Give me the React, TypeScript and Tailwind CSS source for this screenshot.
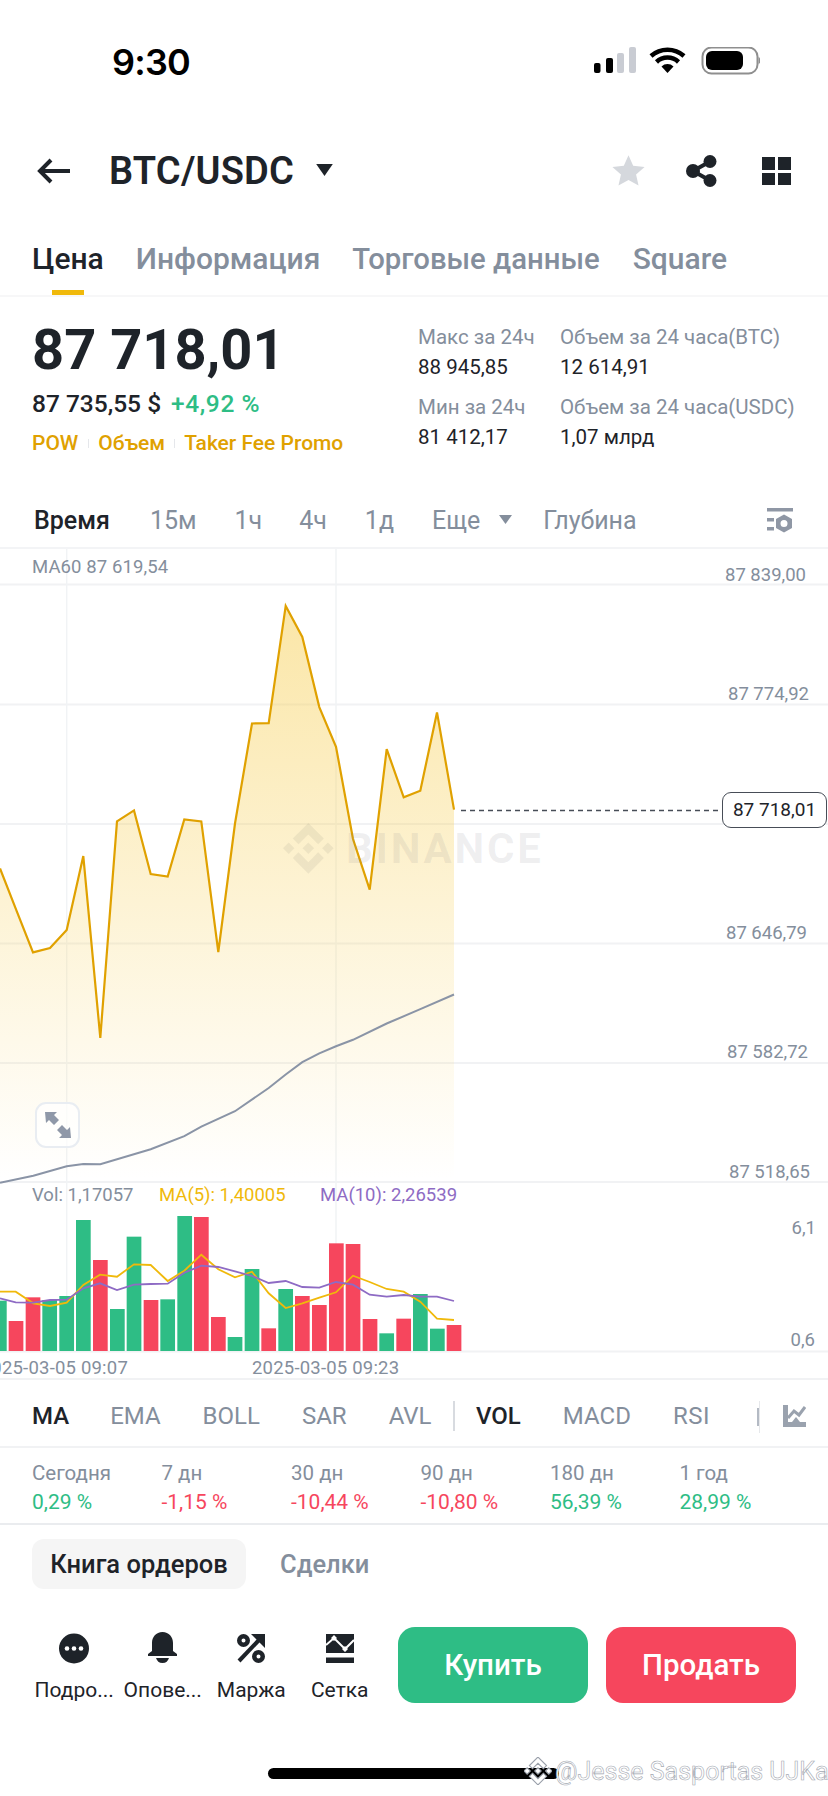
const price: [number, number][] = [[0,780],[50,885],[99,986],[150,975],[200,931],[250,750],[301,1195],[351,665],[402,638],[452,794],[503,800],[553,660],[604,665],[655,985],[705,670],[756,425],[806,424],[857,137],[907,213],[958,385],[1008,482],[1059,708],[1109,832],[1160,488],[1211,606],[1261,590],[1311,398],[1362,636]];
const ma60: [number, number][] = [[0,1550],[100,1533],[200,1510],[250,1504],[301,1505],[452,1468],[553,1436],[604,1413],[705,1375],[806,1318],[857,1285],[907,1255],[958,1233],[1008,1216],[1059,1200],[1160,1160],[1261,1125],[1362,1089]];
const ma5: [number, number][] = [[0,365],[47,365],[100,400],[150,408],[200,398],[250,345],[300,314],[351,320],[402,283],[452,285],[503,333],[553,302],[604,254],[655,298],[705,322],[756,305],[806,370],[857,414],[907,400],[958,383],[1008,367],[1059,317],[1109,336],[1160,357],[1211,365],[1261,395],[1311,446],[1362,450]];
const ma10: [number, number][] = [[0,385],[47,397],[100,398],[150,390],[200,389],[250,355],[300,340],[351,360],[402,344],[452,342],[503,341],[553,308],[604,287],[655,291],[705,304],[756,318],[806,339],[857,333],[907,351],[958,353],[1008,336],[1059,344],[1109,374],[1160,380],[1211,375],[1261,380],[1311,380],[1362,393]];
const bars: [number, number, number][] = [[-24,392,1],[26,453,0],[77,382,0],[127,390,1],[178,378,1],[228,150,1],[279,270,0],[330,417,1],[380,200,1],[431,390,0],[481,388,1],[532,138,1],[582,141,0],[633,441,0],[683,501,1],[734,297,1],[784,475,0],[835,357,1],[885,378,0],[936,405,0],[987,220,0],[1037,222,0],[1088,447,0],[1138,490,1],[1189,446,0],[1239,372,1],[1290,476,1],[1340,465,0]];

const priceY = (y: number) => y / 2.45 + 550;
const volY = (y: number) => y / 3 + 1170;
const pts = (a: [number, number][], fy: (y: number) => number) => a.map(([x, y]) => `${(x / 3).toFixed(1)},${fy(y).toFixed(1)}`).join(" ");

const BINANCE_LOGO = "M38.73 53.2l24.59-24.58 24.6 24.6 14.3-14.31L63.32 0 24.43 38.9zM0 63.31l14.3-14.3 14.31 14.3-14.31 14.3zM38.73 73.41l24.59 24.59 24.6-24.6 14.31 14.29-38.9 38.91-38.91-38.88zM98 63.31l14.3-14.3 14.31 14.3-14.31 14.3zM77.83 63.3L63.32 48.78 52.59 59.51l-1.24 1.23-2.54 2.54 14.51 14.5 14.51-14.47z";

function PriceChart() {
  const line = pts(price, priceY);
  return (
    <svg className="absolute inset-0" width="828" height="829" viewBox="0 549 828 829">
      <defs>
        <linearGradient id="fill" gradientUnits="userSpaceOnUse" x1="0" y1="600" x2="0" y2="1180">
          <stop offset="0" stopColor="#f7cf55" stopOpacity="0.52" />
          <stop offset="1" stopColor="#f7cf55" stopOpacity="0" />
        </linearGradient>
      </defs>
      {[584.5, 704.5, 824, 943.5, 1063, 1182].map((y) => (
        <line key={y} x1="0" x2="828" y1={y} y2={y} stroke="#f1f2f4" strokeWidth="2" />
      ))}
      <line x1="0" x2="828" y1="1351.5" y2="1351.5" stroke="#f1f2f4" strokeWidth="2" />
      <line x1="66.7" x2="66.7" y1="549" y2="1351" stroke="#f1f3f5" strokeWidth="1.5" />
      <line x1="336" x2="336" y1="549" y2="1351" stroke="#f1f3f5" strokeWidth="1.5" />
      <polygon points={`0,1182 ${line} 454,1182`} fill="url(#fill)" />
      <path d={BINANCE_LOGO} transform="translate(283,823) scale(0.4)" fill="#8a8a7a" fillOpacity="0.13" />
      <polyline points={line} fill="none" stroke="#e0a100" strokeWidth="2.2" strokeLinejoin="miter" />
      <polyline points={pts(ma60, priceY)} fill="none" stroke="#8a94a6" strokeWidth="2" />
      <line x1="461" x2="720" y1="810.5" y2="810.5" stroke="#474d57" strokeWidth="1.3" strokeDasharray="5 4" />
      {bars.map(([x, y, up]) => (
        <rect key={x} x={x / 3} y={volY(y)} width="14.7" height={1351 - volY(y)} fill={up ? "#2ebd85" : "#f6465d"} />
      ))}
      <polyline points={pts(ma5, volY)} fill="none" stroke="#f0b90b" strokeWidth="1.8" />
      <polyline points={pts(ma10, volY)} fill="none" stroke="#8e6bc4" strokeWidth="1.8" />
    </svg>
  );
}

function StatusBar() {
  return (
    <div className="h-[124px] relative flex items-center pl-[112px] pr-[68px] justify-between">
      <span className="text-[36px] font-semibold text-black font-['Inter',sans-serif] tracking-[-0.8px] leading-none">9:30</span>
      <svg width="166" height="30" viewBox="0 0 166 30">
        <rect x="0" y="16" width="6.500" height="10" rx="2" fill="#000" />
        <rect x="12" y="11" width="7" height="15" rx="2" fill="#000" />
        <rect x="23" y="6" width="7" height="20" rx="2" fill="#c9ccd3" />
        <rect x="35" y="0" width="7" height="26" rx="2" fill="#c9ccd3" />
        <path d="M57 9a25 25 0 0 1 33 0" fill="none" stroke="#000" strokeWidth="4.500" />
        <path d="M62.500 15a16 16 0 0 1 22 0" fill="none" stroke="#000" strokeWidth="4.500" />
        <path d="M73.500 26l-6-6.500a8.500 8.500 0 0 1 12 0z" fill="#000" />
        <rect x="108.500" y="0.500" width="55" height="26" rx="9" fill="none" stroke="#8f8f8f" strokeWidth="2" />
        <rect x="112" y="4" width="37" height="19" rx="6" fill="#000" />
        <path d="M164.500 10a4 4 0 0 1 0 7z" fill="#8f8f8f" />
      </svg>
    </div>
  );
}

function NavBar() {
  return (
    <div className="h-[94px] flex items-center pl-[37px] pr-[37px] text-[#1e2329]">
      <svg width="33" height="26" viewBox="0 0 33 26"><path d="M14 2L3 13l11 11M3 13h30" fill="none" stroke="#1e2329" strokeWidth="4" /></svg>
      <span className="ml-[39px] text-[38px] font-semibold leading-none tracking-[0.2px]">BTC/USDC</span>
      <svg className="ml-[22px] -mt-[2px]" width="17" height="12" viewBox="0 0 18 13"><path d="M0 0h18L9 13z" fill="#1e2329" /></svg>
      <div className="flex-1" />
      <svg width="33" height="32" viewBox="0 0 24 23"><path d="M12 0l3.400 7.600 8.300.9-6.200 5.500 1.800 8.100L12 18l-7.300 4.100 1.800-8.100L.3 8.500l8.300-.9z" fill="#d5d8dd" /></svg>
      <svg className="ml-[41px]" width="31" height="32" viewBox="0 0 31 32">
        <circle cx="7" cy="16" r="7" fill="#1e2329" /><circle cx="24" cy="6.500" r="6.500" fill="#1e2329" /><circle cx="24" cy="25.500" r="6.500" fill="#1e2329" />
        <path d="M7 16L24 6.500M7 16l17 9.500" stroke="#1e2329" strokeWidth="4" />
      </svg>
      <svg className="ml-[45px]" width="29" height="28" viewBox="0 0 29 28"><path d="M0 0h13v13H0zM16 0h13v13H16zM0 16h13v12H0zM16 16h13v12H16z" fill="#1e2329" /></svg>
    </div>
  );
}

function Tabs() {
  return (
    <div className="h-[79px] relative flex items-start pt-[24px] pl-[32px] gap-[32px] text-[30px] leading-[34px] font-medium text-[#848e9c] border-b-2 border-[#f7f7f8]">
      <span className="text-[#1e2329]">Цена</span>
      <span>Информация</span>
      <span className="text-[29.3px]">Торговые данные</span>
      <span className="ml-[1px]">Square</span>
      <div className="absolute left-[52px] bottom-0 w-[32px] h-[5px] bg-[#f0b90b]" />
    </div>
  );
}

function Stat({ label, value, className }: { label: string; value: string; className?: string }) {
  return (
    <div className={className}>
      <div className="text-[20.5px] leading-[26px] text-[#848e9c] whitespace-nowrap">{label}</div>
      <div className="text-[20.5px] leading-[26px] mt-[4px] text-[#1e2329] whitespace-nowrap">{value}</div>
    </div>
  );
}

function PriceSection() {
  return (
    <div className="h-[198px] flex pl-[32px]">
      <div className="w-[386px] pt-[21px]">
        <div className="text-[56px] leading-[64px] font-bold text-[#1e2329] whitespace-nowrap">87 718,01</div>
        <div className="mt-[7px] flex items-center gap-[10px] text-[24.5px] leading-[30px] font-medium">
          <span className="text-[#1e2329]">87 735,55 $</span>
          <span className="text-[#2ebd85] tracking-[0.6px]">+4,92 %</span>
        </div>
        <div className="mt-[10px] flex items-center text-[21px] leading-[28px] font-medium text-[#e0a100] whitespace-nowrap">
          <span>POW</span>
          <span className="mx-[9.5px] w-[1px] h-[9px] bg-[#e5e7eb]" />
          <span>Объем</span>
          <span className="mx-[9px] w-[1px] h-[9px] bg-[#e5e7eb]" />
          <span>Taker Fee Promo</span>
        </div>
      </div>
      <div className="w-[142px] pt-[27px] flex flex-col gap-[14px]">
        <Stat label="Макс за 24ч" value="88 945,85" />
        <Stat label="Мин за 24ч" value="81 412,17" />
      </div>
      <div className="pt-[27px] flex flex-col gap-[14px]">
        <Stat label="Объем за 24 часа(BTC)" value="12 614,91" />
        <Stat label="Объем за 24 часа(USDC)" value="1,07 млрд" />
      </div>
    </div>
  );
}

function TimeRow() {
  return (
    <div className="h-[54px] relative flex items-center pl-[34px] pr-[34px] text-[25px] text-[#848e9c] border-b-2 border-[#f3f4f6]">
      <span className="font-medium text-[#1e2329]">Время</span>
      <span className="ml-[40px]">15м</span>
      <span className="ml-[38px]">1ч</span>
      <span className="ml-[37px]">4ч</span>
      <span className="ml-[38px]">1д</span>
      <span className="ml-[38px]">Еще</span>
      <svg className="ml-[19px] -mt-[3px]" width="13" height="9" viewBox="0 0 13 9"><path d="M0 0h13L6.500 9z" fill="#848e9c" /></svg>
      <span className="ml-[31px]">Глубина</span>
      <div className="flex-1" />
      <svg width="27" height="27" viewBox="0 0 27 27">
        <path d="M0 0h26v3.500H0zM0 10h7v3.500H0zM0 19h7v3.500H0z" fill="#8f97a5" />
        <path fillRule="evenodd" d="M17 6.500l8 4.500v9l-8 4.500-8-4.500v-9zM17 12a3.500 3.500 0 1 0 0 7 3.500 3.500 0 0 0 0-7z" fill="#8f97a5" />
      </svg>
    </div>
  );
}

function AxisLabels() {
  const cls = "absolute -translate-y-1/2 text-[18.5px] leading-[22px] text-[#848e9c] whitespace-nowrap";
  return (
    <>
      <span className={`${cls} left-[32px] top-[18px] tracking-[0.1px]`}>MA60 87 619,54</span>
      <span className={`${cls} right-[22px] top-[26px]`}>87 839,00</span>
      <span className={`${cls} right-[19px] top-[145px]`}>87 774,92</span>
      <span className={`${cls} right-[21px] top-[384px]`}>87 646,79</span>
      <span className={`${cls} right-[20px] top-[503px]`}>87 582,72</span>
      <span className={`${cls} right-[18px] top-[623px]`}>87 518,65</span>
      <span className={`${cls} right-[12px] top-[679px]`}>6,1</span>
      <span className={`${cls} right-[13px] top-[791px]`}>0,6</span>
      <span className={`${cls} left-[32px] top-[646px]`}>Vol: 1,17057</span>
      <span className={`${cls} left-[159px] top-[646px] !text-[#f0b90b]`}>MA(5): 1,40005</span>
      <span className={`${cls} left-[320px] top-[646px] !text-[#8e6bc4]`}>MA(10): 2,26539</span>
      <span className={`${cls} right-[700px] top-[819px] tracking-[0.2px]`}>2025-03-05 09:07</span>
      <span className={`${cls} left-[252px] top-[819px] tracking-[0.2px]`}>2025-03-05 09:23</span>
      <span className="absolute left-[346px] top-[278px] text-[42px] leading-[44px] font-bold tracking-[2.8px] text-[#85858a]/[0.13]">BINANCE</span>
      <div className="absolute left-[722px] top-[243px] w-[105px] h-[36px] rounded-[9px] border border-[#474d57] bg-white flex items-center justify-center text-[19px] text-[#1e2329]">87 718,01</div>
      <div className="absolute left-[35px] top-[553px] w-[45px] h-[46px] rounded-[11px] border-2 border-[#e9edf2] bg-white/70 flex items-center justify-center">
        <svg width="26" height="26" viewBox="0 0 26 26">
          <path d="M0 0h12L9 3l5 5-5 5-5-5-3 3zM26 26H14l3-3-5-5 5-5 5 5 3-3z" fill="#8f98a8" />
        </svg>
      </div>
    </>
  );
}

function Indicators() {
  return (
    <div className="h-[70px] flex items-center pl-[32px] pt-[6px] text-[24px] text-[#848e9c] border-b-2 border-t-2 border-[#f1f2f4] relative">
      <span className="font-medium text-[#1e2329]">MA</span>
      <span className="ml-[41px]">EMA</span>
      <span className="ml-[42px]">BOLL</span>
      <span className="ml-[42px]">SAR</span>
      <span className="ml-[42px]">AVL</span>
      <span className="ml-[22px] w-[1.5px] h-[30px] bg-[#d8dbe0]" />
      <span className="ml-[21px] font-medium text-[#1e2329]">VOL</span>
      <span className="ml-[42px]">MACD</span>
      <span className="ml-[42px] tracking-[0.5px]">RSI</span>
      <span className="absolute left-[759px] top-[21px] w-[1px] h-[32px] bg-[#e6e8eb]" />
      <span className="absolute left-[757px] top-[28px] w-[2px] h-[18px] bg-[#b4bac4]" />
      <svg className="absolute left-[783px] top-[25px]" width="23" height="23" viewBox="0 0 23 23">
        <path d="M0 0h5v17h18v5H0z" fill="#9aa2ae" />
        <path d="M5 13l6-7 5 4 6-8" fill="none" stroke="#9aa2ae" strokeWidth="3" />
        <path d="M9 17l4-5 4 5z" fill="#9aa2ae" />
      </svg>
    </div>
  );
}

const periods: [string, string, boolean][] = [["Сегодня", "0,29 %", true], ["7 дн", "-1,15 %", false], ["30 дн", "-10,44 %", false], ["90 дн", "-10,80 %", false], ["180 дн", "56,39 %", true], ["1 год", "28,99 %", true]];

function Periods() {
  return (
    <div className="h-[77px] grid grid-cols-[repeat(6,129.5px)] items-center pl-[32px] pt-[5px] border-b-2 border-[#eaecef]">
      {periods.map(([l, v, up]) => (
        <div key={l} className="leading-[29px]">
          <div className="text-[20.5px] text-[#848e9c]">{l}</div>
          <div className={`text-[21px] ${up ? "text-[#2ebd85]" : "text-[#f6465d]"}`}>{v}</div>
        </div>
      ))}
    </div>
  );
}

function OrderTabs() {
  return (
    <div className="mt-[14px] ml-[32px] flex items-center gap-[34px] text-[25.5px]">
      <div className="w-[214px] h-[50px] rounded-[12px] bg-[#f5f5f5] flex items-center justify-center font-medium text-[#1e2329]">Книга ордеров</div>
      <span className="font-medium text-[#848e9c]">Сделки</span>
    </div>
  );
}

function ActionItem({ label, children }: { label: string; children: React.ReactNode }) {
  return (
    <div className="w-[88.5px] flex flex-col items-center">
      <div className="h-[34px] flex items-center justify-center">{children}</div>
      <span className="mt-[12px] text-[21px] leading-[26px] text-[#1e2329] whitespace-nowrap">{label}</span>
    </div>
  );
}

function Actions() {
  return (
    <div className="mt-[38px] h-[76px] flex items-start pl-[30px] relative">
      <div className="flex pt-[4px]">
        <ActionItem label="Подро...">
          <svg width="30" height="31" viewBox="0 0 30 31"><circle cx="15" cy="15.500" r="15" fill="#1e2329" /><circle cx="8" cy="15.500" r="2.300" fill="#fff" /><circle cx="15" cy="15.500" r="2.300" fill="#fff" /><circle cx="22" cy="15.500" r="2.300" fill="#fff" /></svg>
        </ActionItem>
        <ActionItem label="Опове...">
          <svg width="29" height="32" viewBox="0 0 29 32"><path d="M14.500 0C8 0 4 5 4 11v8l-4 3v2h29v-2l-4-3v-8C25 5 21 0 14.500 0z" fill="#1e2329" /><path d="M8 26h13c-1 3-3 5-6.500 5S9 29 8 26z" fill="#1e2329" /></svg>
        </ActionItem>
        <ActionItem label="Маржа">
          <svg width="28" height="29" viewBox="0 0 28 29" fill="#1e2329">
            <path d="M14 0h14v14z" />
            <path d="M2 27L22 6" stroke="#1e2329" strokeWidth="4" />
            <path fillRule="evenodd" d="M6.500 0a6.500 6.500 0 1 1 0 13 6.500 6.500 0 0 1 0-13zM6.500 4.500a2 2 0 1 0 0 4 2 2 0 0 0 0-4zM21.500 16a6.500 6.500 0 1 1 0 13 6.500 6.500 0 0 1 0-13zM21.500 20.500a2 2 0 1 0 0 4 2 2 0 0 0 0-4z" />
          </svg>
        </ActionItem>
        <ActionItem label="Сетка">
          <svg width="28" height="29" viewBox="0 0 28 29">
            <path d="M0 0h28v19H0zM0 23.500h28v5.500H0z" fill="#1e2329" />
            <path d="M0 11l8-7 11 11 9-9" fill="none" stroke="#fff" strokeWidth="2" />
            <path d="M8 1l3 3-3 3-3-3zM19 12l3 3-3 3-3-3z" fill="#fff" />
          </svg>
        </ActionItem>
      </div>
      <div className="absolute left-[398px] flex gap-[18px] text-[29.5px] font-medium text-white">
        <div className="w-[190px] h-[76px] rounded-[17px] bg-[#2ebd85] flex items-center justify-center">Купить</div>
        <div className="w-[190px] h-[76px] rounded-[17px] bg-[#f6465d] flex items-center justify-center">Продать</div>
      </div>
    </div>
  );
}

export default function App() {
  return (
    <div className="w-[828px] h-[1796px] bg-white flex flex-col overflow-hidden relative font-['Roboto',sans-serif]">
      <StatusBar />
      <NavBar />
      <Tabs />
      <PriceSection />
      <TimeRow />
      <div className="relative h-[829px] overflow-hidden">
        <PriceChart />
        <AxisLabels />
      </div>
      <Indicators />
      <Periods />
      <OrderTabs />
      <Actions />
      <div className="flex-1 relative">
        <div className="absolute left-[268px] top-[65px] w-[291px] h-[11px] rounded-full bg-black" />
        <svg className="absolute left-[524px] top-[54px]" width="28" height="28" viewBox="0 0 127 127">
          <path d={BINANCE_LOGO} fill="#fff" stroke="#9aa0aa" strokeWidth="5" />
        </svg>
        <span className="absolute left-[555px] top-[52px] text-[25px] leading-[34px] text-white whitespace-nowrap [-webkit-text-stroke:0.6px_#a4a9b2]">@Jesse Sasportas UJKa</span>
      </div>
    </div>
  );
}
